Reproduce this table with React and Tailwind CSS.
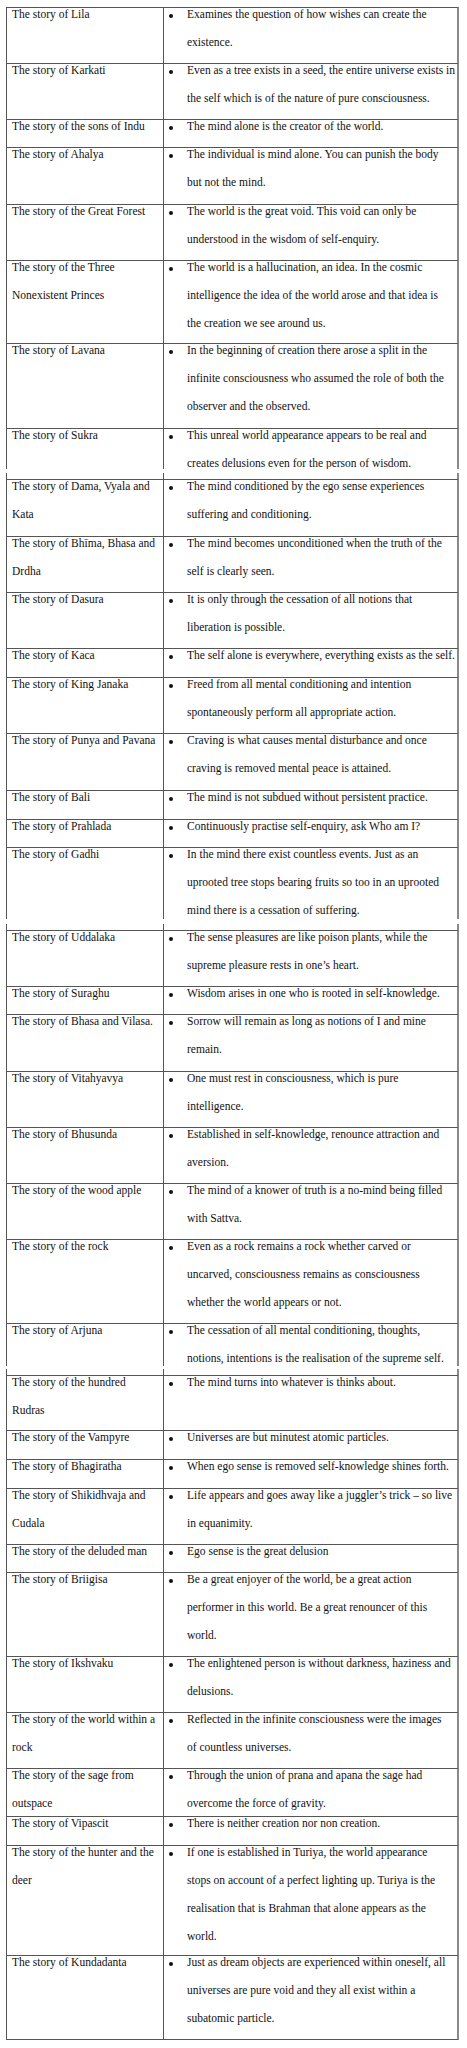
import React from 'react';

// Table of stories, stitched from page captures (hence the breaks)
const blocks = [
   { type: 'row', h: 'h-[56px]', left: ['The story of Lila'], right: ['Examines the question of how wishes can create the', 'existence.'] },
   { type: 'row', h: 'h-[56px]', left: ['The story of Karkati'], right: ['Even as a tree exists in a seed, the entire universe exists in', 'the self which is of the nature of pure consciousness.'] },
   { type: 'row', h: 'h-[28px]', left: ['The story of the sons of Indu'], right: ['The mind alone is the creator of the world.'] },
   { type: 'row', h: 'h-[57px]', left: ['The story of Ahalya'], right: ['The individual is mind alone. You can punish the body', 'but not the mind.'] },
   { type: 'row', h: 'h-[56px]', left: ['The story of the Great Forest'], right: ['The world is the great void. This void can only be', 'understood in the wisdom of self-enquiry.'] },
   { type: 'row', h: 'h-[83px]', left: ['The story of the Three', 'Nonexistent Princes'], right: ['The world is a hallucination, an idea. In the cosmic', 'intelligence the idea of the world arose and that idea is', 'the creation we see around us.'] },
   { type: 'row', h: 'h-[85px]', left: ['The story of Lavana'], right: ['In the beginning of creation there arose a split in the', 'infinite consciousness who assumed the role of both the', 'observer and the observed.'] },
   { type: 'row', h: 'h-[41px]', left: ['The story of Sukra'], right: ['This unreal world appearance appears to be real and', 'creates delusions even for the person of wisdom.'] },
   { type: 'gap', h: 'h-[4px]' },
   { type: 'side', h: 'h-[6px]' },
   { type: 'row', h: 'h-[57px]', left: ['The story of Dama, Vyala and', 'Kata'], right: ['The mind conditioned by the ego sense experiences', 'suffering and conditioning.'] },
   { type: 'row', h: 'h-[56px]', left: ['The story of Bhīma, Bhasa and', 'Drdha'], right: ['The mind becomes unconditioned when the truth of the', 'self is clearly seen.'] },
   { type: 'row', h: 'h-[56px]', left: ['The story of Dasura'], right: ['It is only through the cessation of all notions that', 'liberation is possible.'] },
   { type: 'row', h: 'h-[29px]', left: ['The story of Kaca'], right: ['The self alone is everywhere, everything exists as the self.'] },
   { type: 'row', h: 'h-[56px]', left: ['The story of King Janaka'], right: ['Freed from all mental conditioning and intention', 'spontaneously perform all appropriate action.'] },
   { type: 'row', h: 'h-[57px]', left: ['The story of Punya and Pavana'], right: ['Craving is what causes mental disturbance and once', 'craving is removed mental peace is attained.'] },
   { type: 'row', h: 'h-[29px]', left: ['The story of Bali'], right: ['The mind is not subdued without persistent practice.'] },
   { type: 'row', h: 'h-[28px]', left: ['The story of Prahlada'], right: ['Continuously practise self-enquiry, ask Who am I?'] },
   { type: 'row', h: 'h-[72px]', left: ['The story of Gadhi'], right: ['In the mind there exist countless events. Just as an', 'uprooted tree stops bearing fruits so too in an uprooted', 'mind there is a cessation of suffering.'] },
   { type: 'gap', h: 'h-[5px]' },
   { type: 'side', h: 'h-[6px]' },
   { type: 'row', h: 'h-[56px]', left: ['The story of Uddalaka'], right: ['The sense pleasures are like poison plants, while the', 'supreme pleasure rests in one’s heart.'] },
   { type: 'row', h: 'h-[28px]', left: ['The story of Suraghu'], right: ['Wisdom arises in one who is rooted in self-knowledge.'] },
   { type: 'row', h: 'h-[57px]', left: ['The story of Bhasa and Vilasa.'], right: ['Sorrow will remain as long as notions of I and mine', 'remain.'] },
   { type: 'row', h: 'h-[56px]', left: ['The story of Vitahyavya'], right: ['One must rest in consciousness, which is pure', 'intelligence.'] },
   { type: 'row', h: 'h-[56px]', left: ['The story of Bhusunda'], right: ['Established in self-knowledge, renounce attraction and', 'aversion.'] },
   { type: 'row', h: 'h-[56px]', left: ['The story of the wood apple'], right: ['The mind of a knower of truth is a no-mind being filled', 'with Sattva.'] },
   { type: 'row', h: 'h-[84px]', left: ['The story of the rock'], right: ['Even as a rock remains a rock whether carved or', 'uncarved, consciousness remains as consciousness', 'whether the world appears or not.'] },
   { type: 'row', h: 'h-[43px]', left: ['The story of Arjuna'], right: ['The cessation of all mental conditioning, thoughts,', 'notions, intentions is the realisation of the supreme self.'] },
   { type: 'gap', h: 'h-[3px]' },
   { type: 'side', h: 'h-[6px]' },
   { type: 'row', h: 'h-[55px]', left: ['The story of the hundred', 'Rudras'], right: ['The mind turns into whatever is thinks about.'] },
   { type: 'row', h: 'h-[29px]', left: ['The story of the Vampyre'], right: ['Universes are but minutest atomic particles.'] },
   { type: 'row', h: 'h-[29px]', left: ['The story of Bhagiratha'], right: ['When ego sense is removed self-knowledge shines forth.'] },
   { type: 'row', h: 'h-[56px]', left: ['The story of Shikidhvaja and', 'Cudala'], right: ['Life appears and goes away like a juggler’s trick – so live', 'in equanimity.'] },
   { type: 'row', h: 'h-[28px]', left: ['The story of the deluded man'], right: ['Ego sense is the great delusion'] },
   { type: 'row', h: 'h-[84px]', left: ['The story of Briigisa'], right: ['Be a great enjoyer of the world, be a great action', 'performer in this world. Be a great renouncer of this', 'world.'] },
   { type: 'row', h: 'h-[56px]', left: ['The story of Ikshvaku'], right: ['The enlightened person is without darkness, haziness and', 'delusions.'] },
   { type: 'row', h: 'h-[56px]', left: ['The story of the world within a', 'rock'], right: ['Reflected in the infinite consciousness were the images', 'of countless universes.'] },
   { type: 'row', h: 'h-[48px]', left: ['The story of the sage from', 'outspace'], right: ['Through the union of prana and apana the sage had', 'overcome the force of gravity.'] },
   { type: 'row', h: 'h-[29px]', left: ['The story of Vipascit'], right: ['There is neither creation nor non creation.'] },
   { type: 'row', h: 'h-[110px]', left: ['The story of the hunter and the', 'deer'], right: ['If one is established in Turiya, the world appearance', 'stops on account of a perfect lighting up. Turiya is the', 'realisation that is Brahman that alone appears as the', 'world.'] },
   { type: 'row', h: 'h-[85px]', last: true, left: ['The story of Kundadanta'], right: ['Just as dream objects are experienced within oneself, all', 'universes are pure void and they all exist within a', 'subatomic particle.'] },
];

const Lines = ({ lines }) => (
   <div className="-mt-[8px]">
      {lines.map((l, i) => (
         <div key={i} className="leading-[28px] whitespace-nowrap">{l}</div>
      ))}
   </div>
);

const Row = ({ block }) => {
   if (block.type === 'gap') return <div className={block.h} />;

   const sides = 'flex border-l border-l-[#555] border-r-2 border-r-[#8a8a8a]';

   if (block.type === 'side') {
      return (
         <div className={`${sides} ${block.h}`}>
            <div className="w-[157px] shrink-0 border-r border-r-[#555]" />
            <div className="flex-1" />
         </div>
      );
   }

   return (
      <div className={`${sides} ${block.h} border-t border-t-[#555] overflow-hidden ${block.last ? 'border-b border-b-[#555]' : ''}`}>
         {/* Story name */}
         <div className="w-[157px] shrink-0 border-r border-r-[#555] pl-[5px]">
            <Lines lines={block.left} />
         </div>
         {/* Bulleted lesson */}
         <div className="flex-1 flex">
            <div className="w-[23px] shrink-0">
               <div className="ml-[5px] mt-[6px] w-[4px] h-[4px] rounded-full bg-[#111]" />
            </div>
            <Lines lines={block.right} />
         </div>
      </div>
   );
};

export default function App() {
   return (
      <div className="w-[467px] min-h-[2048px] bg-white pt-[7px] font-['Liberation_Serif',serif] text-[11.5px] text-[#111]">
         <div className="ml-[6px] w-[453px]">
            {blocks.map((b, i) => (
               <Row key={i} block={b} />
            ))}
         </div>
      </div>
   );
}
